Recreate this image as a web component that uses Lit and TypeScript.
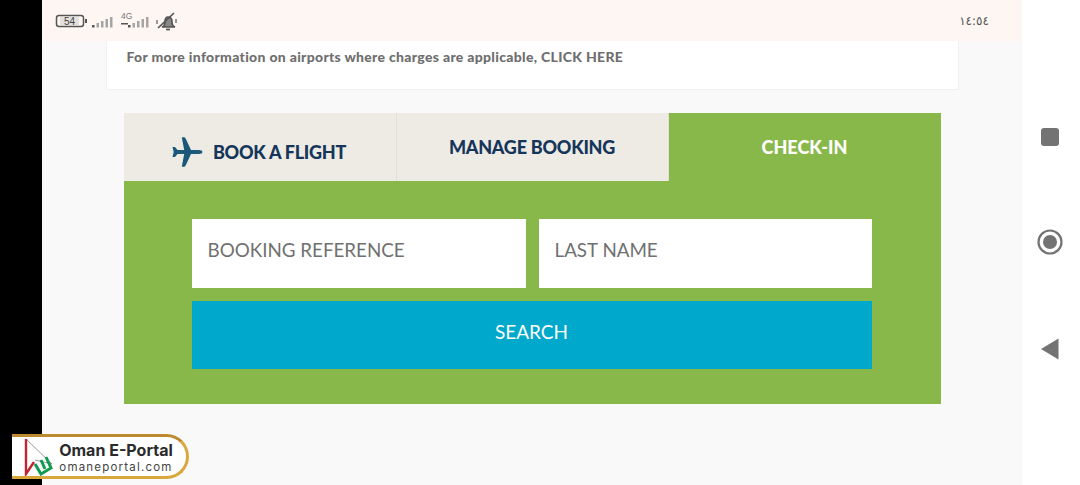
import { LitElement, html, css, svg } from "lit";
import { customElement } from "lit/decorators.js";

const bars = () => svg`
  <rect x="0" y="9" width="2.500" height="2.500" fill="#555"/>
  <rect x="4.500" y="7" width="2.500" height="4.500" fill="#a5a5a5"/>
  <rect x="9" y="5" width="2.500" height="6.500" fill="#a5a5a5"/>
  <rect x="13.500" y="3" width="2.500" height="8.500" fill="#a5a5a5"/>
  <rect x="18" y="1" width="2.500" height="10.500" fill="#a5a5a5"/>`;

@customElement("app-root")
export class AppRoot extends LitElement {
  static styles = css`
    :host { display: block; width: 1080px; height: 485px; overflow: hidden; position: relative; background: #fff; font-family: "Lato", sans-serif; }
    .shell { display: flex; height: 485px; }
    .black { width: 42px; background: #000; flex: none; }
    .screen { width: 980px; flex: none; background: #f9f9f9; display: flex; flex-direction: column; align-items: center; }
    .nav { flex: 1; display: flex; flex-direction: column; align-items: center; padding: 127px 2px 0 0; gap: 82px; background: #fff; }
    .status { align-self: stretch; height: 41px; flex: none; background: #fdf6f2; display: flex; align-items: center; justify-content: space-between; padding: 0 33px 0 13px; color: #555; }
    .status svg { display: block; }
    .clock { font: 12px "DejaVu Sans", sans-serif; color: #555; letter-spacing: 0.3px; }
    .info { width: 853px; height: 49px; box-sizing: border-box; background: #fff; border: 1px solid #f1f1f1; border-top: 0; padding: 7px 0 0 20px; font-size: 14px; line-height: 18px; font-weight: 900; color: #6f6f6f; flex: none; letter-spacing: 0.31px; white-space: nowrap; }
    .widget { width: 817px; margin-top: 23px; background: #89b84a; flex: none; }
    .tabs { display: grid; grid-template-columns: 273px 272px 272px; height: 68px; }
    .tab { display: flex; align-items: center; justify-content: center; background: #eeebe5; color: #15365a; font-size: 18px; font-weight: 900; box-sizing: border-box; letter-spacing: -0.25px; }
    .tab.first { border-right: 1px solid #e2dfd8; padding: 9px 2px 0 0; gap: 10px; }
    .tab.second { border-right: 1px solid #e2dfd8; }
    .tab.active { background: #89b84a; color: #fff; letter-spacing: 0; }
    .form { padding: 38px 69px 35px 68px; display: flex; flex-direction: column; gap: 13px; }
    .row { display: grid; grid-template-columns: 334px 333px; justify-content: space-between; }
    .field { height: 69px; background: #fff; display: flex; align-items: center; padding: 0 0 8px 16px; box-sizing: border-box; font-size: 18.800px; color: #707070; }
    .search { height: 68px; background: #00a8cb; color: #fff; display: flex; align-items: center; justify-content: center; font-size: 19px; padding-bottom: 7px; box-sizing: border-box; }
    .logo { position: absolute; left: 12px; top: 434px; width: 177px; height: 45px; box-sizing: border-box; background: #fff; border: 3px solid #d9a83c; border-top-color: #bd8a30; border-left: 0; border-radius: 0 23px 23px 0; display: flex; align-items: center; }
    .logo svg { margin-left: 10px; flex: none; }
    .names { margin-left: 2px; width: 120px; display: flex; flex-direction: column; align-items: center; font-family: "Inter", sans-serif; color: #2b2b2b; padding-top: 1px; }
    .n1 { font-size: 16px; line-height: 20px; font-weight: 700; white-space: nowrap; }
    .n2 { font-size: 11.500px; line-height: 14px; letter-spacing: 1.200px; color: #444; white-space: nowrap; }
  `;

  render() {
    return html`
      <div class="shell">
        <div class="black"></div>
        <div class="screen">
          <div class="status">
            <svg width="125" height="22" viewBox="0 0 125 22">
              <rect x="1.500" y="5.500" width="27" height="11" rx="2.500" fill="none" stroke="#555" stroke-width="1.500"/>
              <rect x="5" y="7" width="19" height="8" fill="#e4e0dc"/>
              <text x="14.500" y="15" font-size="10" text-anchor="middle" fill="#444" font-family="Liberation Sans">54</text>
              <rect x="30" y="9" width="2" height="4" fill="#555"/>
              <g transform="translate(37,6)">${bars()}</g>
              <text x="66" y="9" font-size="8.500" fill="#777" font-family="Liberation Sans">4G</text>
              <rect x="66" y="13" width="7" height="1.500" fill="#555"/>
              <g transform="translate(73,6)">${bars()}</g>
              <g stroke="#555" fill="none" stroke-width="1.700">
                <path d="M107 17 q3-1 3-5 q0-5 3-5 q4 0 4 5 q0 4 3 5 z" fill="#888"/>
                <path d="M103 18 L119 3"/>
                <path d="M102 10v4M121 9v4" stroke="#888"/>
                <path d="M111 19.500h4"/>
              </g>
            </svg>
            <span class="clock">١٤:٥٤</span>
          </div>
          <div class="info">For more information on airports where charges are applicable, CLICK HERE</div>
          <div class="widget">
            <div class="tabs">
              <div class="tab first">
                <svg width="32" height="30" viewBox="0 0 32 30">
                  <path fill="#1a5a78" d="M31.500 15c0-1.300-1.500-2-3.500-2h-8L14.500 1.200C14 .3 12.500-.2 10.800.6l2.400 12.400H6.500L4 10H1.500l1.200 5-1.200 5H4l2.500-3h6.700l-2.400 12.400c1.700.8 3.200.3 3.700-.6L20 17h8c2 0 3.500-.7 3.500-2z"/>
                </svg>
                <span>BOOK A FLIGHT</span>
              </div>
              <div class="tab second">MANAGE BOOKING</div>
              <div class="tab active">CHECK-IN</div>
            </div>
            <div class="form">
              <div class="row">
                <div class="field">BOOKING REFERENCE</div>
                <div class="field">LAST NAME</div>
              </div>
              <div class="search">SEARCH</div>
            </div>
          </div>
        </div>
        <div class="nav">
          <svg width="20" height="20" viewBox="0 0 20 20"><rect x="1" y="1" width="18" height="18" rx="3" fill="#737373"/></svg>
          <svg width="26" height="26" viewBox="0 0 26 26"><circle cx="13" cy="13" r="11.500" fill="none" stroke="#737373" stroke-width="2.200"/><circle cx="13" cy="13" r="7" fill="#737373"/></svg>
          <svg width="20" height="24" viewBox="0 0 20 24"><path d="M1 12 L18.500 1.500 V22.500 Z" fill="#737373"/></svg>
        </div>
      </div>
      <div class="logo">
        <svg width="32" height="38" viewBox="0 0 32 38">
          <path d="M4 1 L30 26 L13 22" fill="#fff" stroke="#999" stroke-width="1"/>
          <path d="M4 1 V36 L12 24" fill="none" stroke="#c4232f" stroke-width="2.400"/>
          <path d="M13 26 L19 36 L29 30 L24 19 M19 22 L23 31" fill="none" stroke="#129a50" stroke-width="3"/>
        </svg>
        <div class="names">
          <span class="n1">Oman E-Portal</span>
          <span class="n2">omaneportal.com</span>
        </div>
      </div>
    `;
  }
}
